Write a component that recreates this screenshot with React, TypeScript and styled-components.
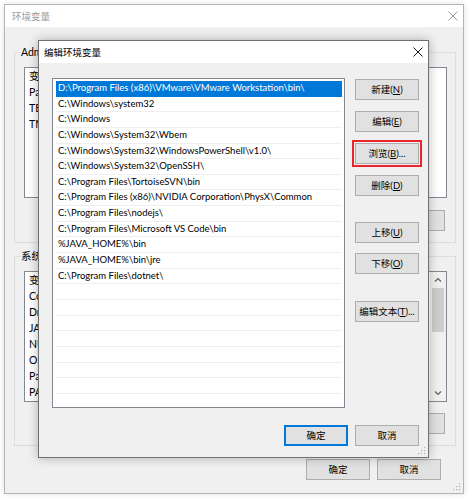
import styled, { createGlobalStyle } from 'styled-components'

const GlobalStyle = createGlobalStyle`
	html, body {
		margin: 0;
		background: #fff;
	}
	body {
		font-family: Lato, "Noto Sans CJK SC", sans-serif;
		font-size: 9.5px;
		color: #000;
	}
	* {
		box-sizing: border-box;
	}
`

const Desktop = styled.div`
	position: relative;
	width: 474px;
	height: 502px;
	padding: 4px;
`

const Window = styled.div<{ $active?: boolean }>`
	position: relative;
	display: flex;
	flex-direction: column;
	width: 460px;
	height: 490px;
	background: #f0f0f0;
	border: 1px solid ${p => (p.$active ? '#6f6f6f' : '#b4b4b4')};
	box-shadow: 0 0 6px rgba(0, 0, 0, 0.12);
`

const Dialog = styled(Window)`
	position: absolute;
	left: 38px;
	top: 40px;
	width: 391px;
	height: 418px;
	box-shadow: 0 0 10px rgba(0, 0, 0, 0.28);
`

const TitleBar = styled.div<{ $active?: boolean; $indent: number }>`
	display: flex;
	align-items: center;
	justify-content: space-between;
	flex: none;
	height: 22px;
	padding: 0 5px 0 ${p => p.$indent}px;
	background: #fff;
	color: ${p => (p.$active ? '#000' : '#9a9a9a')};
	svg {
		stroke: ${p => (p.$active ? '#111' : '#9a9a9a')};
	}
`

const OuterBody = styled.div`
	display: flex;
	flex-direction: column;
	flex: 1;
	padding: 0 7px 0 9px;
`

const GroupBox = styled.div<{ $top: number }>`
	display: flex;
	flex-direction: column;
	margin-top: ${p => p.$top}px;
	padding: 0 8px 11px 9px;
	border: 1px solid #dcdcdc;
`

const Caption = styled.span`
	align-self: flex-start;
	margin: -9px 0 0 -4px;
	padding: 0 1px;
	line-height: 16px;
	font-size: 10.5px;
	background: #f0f0f0;
`

const ListView = styled.div<{ $top?: number }>`
	display: flex;
	height: 131px;
	margin-top: ${p => p.$top ?? 0}px;
	background: #fff;
	border: 1px solid #828790;
	overflow: hidden;
`

const ListRows = styled.div`
	flex: 1;
	padding-left: 4px;
	min-width: 0;
	font-size: 10.5px;
`

const ListRow = styled.div`
	display: grid;
	grid-template-columns: 140px 230px;
	height: 16px;
	line-height: 16px;
	white-space: nowrap;
	span {
		overflow: hidden;
		text-overflow: ellipsis;
	}
`

const Scrollbar = styled.div`
	display: flex;
	flex-direction: column;
	align-items: center;
	width: 16px;
	flex: none;
	padding: 3px 0;
	background: #f0f0f0;
`

const ScrollThumb = styled.div`
	width: 12px;
	height: 44px;
	margin-top: 3px;
	background: #cdcdcd;
`

const ScrollTrack = styled.div`
	flex: 1;
`

const ButtonRow = styled.div<{ $top: number; $right: number }>`
	display: flex;
	justify-content: flex-end;
	gap: 7px;
	margin-top: ${p => p.$top}px;
	padding-right: ${p => p.$right}px;
`

const Button = styled.button<{ $default?: boolean; $highlight?: boolean; $top?: number }>`
	flex: none;
	width: 64px;
	height: 21px;
	margin-top: ${p => p.$top ?? 0}px;
	padding: 0;
	background: #e1e1e1;
	border: 1px solid ${p => (p.$default ? '#0078d7' : '#adadad')};
	box-shadow: ${p => (p.$default ? 'inset 0 0 0 1px #0078d7' : 'none')};
	outline: ${p => (p.$highlight ? '2px solid #e8262c' : 'none')};
	outline-offset: 1px;
	font: inherit;
	line-height: 19px;
	color: #000;
	white-space: nowrap;
	u {
		text-underline-offset: 1px;
	}
`

const DialogBody = styled.div`
	display: flex;
	flex-direction: column;
	flex: 1;
	padding: 15px 9px 0 13px;
`

const DialogMain = styled.div`
	display: flex;
	gap: 10px;
`

const PathList = styled.div`
	width: 293px;
	height: 330px;
	padding: 2px 2px 0 3px;
	background: #fff;
	border: 1px solid #828790;
	overflow: hidden;
`

const PathRow = styled.div<{ $selected?: boolean }>`
	height: 15.65px;
	padding-left: 2px;
	line-height: 14.65px;
	white-space: nowrap;
	overflow: hidden;
	border-bottom: 1px solid ${p => (p.$selected ? '#0078d7' : '#efefef')};
	background: ${p => (p.$selected ? '#0078d7' : 'transparent')};
	color: ${p => (p.$selected ? '#fff' : '#000')};
`

const ButtonColumn = styled.div`
	display: flex;
	flex-direction: column;
	padding-top: 1px;
`

const Grip = styled.svg`
	position: absolute;
	right: 2px;
	bottom: 2px;
`

const CloseIcon = () => (
	<svg width="10" height="10" viewBox="0 0 10 10" fill="none" strokeWidth="1">
		<path d="M0.5 0.5 L9.5 9.5 M9.5 0.5 L0.5 9.5" />
	</svg>
)

const Chevron = ({ up }: { up?: boolean }) => (
	<svg width="8" height="10" viewBox="0 0 8 10" fill="none" stroke="#606060" strokeWidth="1.2">
		<path d={up ? 'M1 6.5 L4 3.5 L7 6.5' : 'M1 3.5 L4 6.5 L7 3.5'} />
	</svg>
)

const SizeGrip = () => (
	<Grip width="8" height="8" viewBox="0 0 8 8" fill="#b0b0b0">
		<rect x="6" y="0" width="1.2" height="1.2" />
		<rect x="3" y="3" width="1.2" height="1.2" />
		<rect x="6" y="3" width="1.2" height="1.2" />
		<rect x="0" y="6" width="1.2" height="1.2" />
		<rect x="3" y="6" width="1.2" height="1.2" />
		<rect x="6" y="6" width="1.2" height="1.2" />
	</Grip>
)

const userVars = [
	['变量', '值'],
	['Path', 'C:\\Users\\Administrator\\AppData\\Local\\Microsoft\\WindowsApps;'],
	['TEMP', 'C:\\Users\\Administrator\\AppData\\Local\\Temp'],
	['TMP', 'C:\\Users\\Administrator\\AppData\\Local\\Temp'],
]

const systemVars = [
	['变量', '值'],
	['ComSpec', 'C:\\Windows\\system32\\cmd.exe'],
	['DriverData', 'C:\\Windows\\System32\\Drivers\\DriverData'],
	['JAVA_HOME', 'C:\\Program Files\\Java\\jdk1.8.0_201'],
	['NUMBER_OF_PROCESSORS', '8'],
	['OS', 'Windows_NT'],
	['Path', 'D:\\Program Files (x86)\\VMware\\VMware Workstation\\bin\\;C:\\Windows...'],
	['PATHEXT', '.COM;.EXE;.BAT;.CMD;.VBS;.VBE;.JS;.JSE;.WSF;.WSH;.MSC'],
]

const paths = [
	'D:\\Program Files (x86)\\VMware\\VMware Workstation\\bin\\',
	'C:\\Windows\\system32',
	'C:\\Windows',
	'C:\\Windows\\System32\\Wbem',
	'C:\\Windows\\System32\\WindowsPowerShell\\v1.0\\',
	'C:\\Windows\\System32\\OpenSSH\\',
	'C:\\Program Files\\TortoiseSVN\\bin',
	'C:\\Program Files (x86)\\NVIDIA Corporation\\PhysX\\Common',
	'C:\\Program Files\\nodejs\\',
	'C:\\Program Files\\Microsoft VS Code\\bin',
	'%JAVA_HOME%\\bin',
	'%JAVA_HOME%\\bin\\jre',
	'C:\\Program Files\\dotnet\\',
]

const emptyRows = 9

const VarList = ({ rows, top, scroll }: { rows: string[][]; top: number; scroll?: boolean }) => (
	<ListView $top={top}>
		<ListRows>
			{rows.map(([name, value]) => (
				<ListRow key={name}>
					<span>{name}</span>
					<span>{value}</span>
				</ListRow>
			))}
		</ListRows>
		{scroll && (
			<Scrollbar>
				<Chevron up />
				<ScrollThumb />
				<ScrollTrack />
				<Chevron />
			</Scrollbar>
		)}
	</ListView>
)

const VarButtons = ({ top }: { top: number }) => (
	<ButtonRow $top={top} $right={2}>
		<Button>新建(<u>W</u>)...</Button>
		<Button>编辑(<u>I</u>)...</Button>
		<Button>删除(<u>L</u>)</Button>
	</ButtonRow>
)

export default function App() {
	return (
		<Desktop>
			<GlobalStyle />
			<Window>
				<TitleBar $indent={7}>
					<span>环境变量</span>
					<CloseIcon />
				</TitleBar>
				<OuterBody>
					<GroupBox $top={25}>
						<Caption>Administrator 的用户变量(<u>U</u>)</Caption>
						<VarList rows={userVars} top={7} />
						<VarButtons top={12} />
					</GroupBox>
					<GroupBox $top={13}>
						<Caption>系统变量(<u>S</u>)</Caption>
						<VarList rows={systemVars} top={7} scroll />
						<VarButtons top={11} />
					</GroupBox>
					<ButtonRow $top={13} $right={15}>
						<Button>确定</Button>
						<Button>取消</Button>
					</ButtonRow>
				</OuterBody>
				<SizeGrip />
			</Window>

			<Dialog $active>
				<TitleBar $active $indent={5}>
					<span>编辑环境变量</span>
					<CloseIcon />
				</TitleBar>
				<DialogBody>
					<DialogMain>
						<PathList>
							{paths.map((path, i) => (
								<PathRow key={path} $selected={i === 0}>{path}</PathRow>
							))}
							{Array.from({ length: emptyRows }, (_, i) => (
								<PathRow key={`empty-${i}`} />
							))}
						</PathList>
						<ButtonColumn>
							<Button>新建(<u>N</u>)</Button>
							<Button $top={11}>编辑(<u>E</u>)</Button>
							<Button $top={11} $highlight>浏览(<u>B</u>)...</Button>
							<Button $top={11}>删除(<u>D</u>)</Button>
							<Button $top={26}>上移(<u>U</u>)</Button>
							<Button $top={10}>下移(<u>O</u>)</Button>
							<Button $top={27}>编辑文本(<u>T</u>)...</Button>
						</ButtonColumn>
					</DialogMain>
					<ButtonRow $top={17} $right={0}>
						<Button $default>确定</Button>
						<Button>取消</Button>
					</ButtonRow>
				</DialogBody>
				<SizeGrip />
			</Dialog>
		</Desktop>
	)
}
